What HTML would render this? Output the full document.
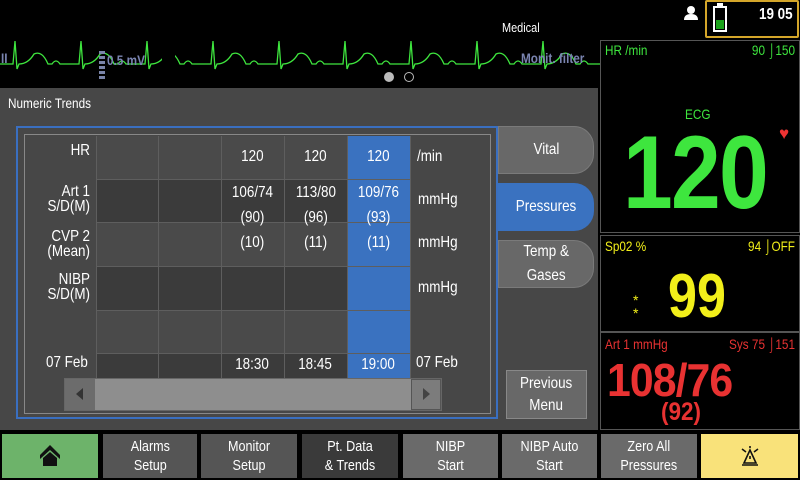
<!DOCTYPE html>
<html><head><meta charset="utf-8"><style>
*{margin:0;padding:0;box-sizing:border-box}
body{width:800px;height:480px;background:#000;position:relative;overflow:hidden;font-family:"Liberation Sans Narrow","Liberation Sans",sans-serif;color:#fff}
.a{position:absolute}
.c{display:flex;align-items:center;justify-content:center;text-align:center}
.n{display:inline-block;transform:scaleX(.84)}
.L{transform:scaleX(.84);transform-origin:left top}
.R{transform:scaleX(.84);transform-origin:right top}
.btn{position:absolute;top:434px;height:44px;font-size:15px;line-height:19px;color:#fff}
.cell{position:absolute;font-size:16px;color:#fff}
</style></head><body>
<!-- top -->
<div class="a L" style="left:502px;top:20px;font-size:13px">Medical</div>
<svg class="a" style="left:683px;top:5px" width="16" height="16"><circle cx="8" cy="5" r="4" fill="#fff"/><path d="M1 15 Q1 9 8 9 Q15 9 15 15Z" fill="#fff"/></svg>
<div class="a" style="left:705px;top:0;width:94px;height:38px;border:2px solid #d4a62a;border-radius:2px"></div>
<div class="a" style="left:713px;top:6px;width:14px;height:26px;border:2px solid #fff"></div>
<div class="a" style="left:717px;top:3px;width:6px;height:3px;background:#fff"></div>
<div class="a" style="left:716px;top:20px;width:8px;height:9px;background:#1aa21a"></div>
<div class="a L" style="left:759px;top:6px;font-size:16px;font-weight:bold">19 05</div>
<!-- ECG -->
<svg class="a" style="left:0;top:36px" width="600" height="50">
<defs><pattern id="p" x="-2" y="0" width="66" height="50" patternUnits="userSpaceOnUse">
<path d="M0 28 L15 28 L17 5 L19 33 L21 28 Q30 28 36 18 Q44 14 50 28 L54 28 Q58 22 62 28 L66 28" fill="none" stroke="#3ee63e" stroke-width="1.3"/></pattern></defs>
<rect x="0" y="0" width="162" height="50" fill="url(#p)"/>
<rect x="175" y="0" width="425" height="50" fill="url(#p)"/>
<rect x="99" y="15" width="6" height="3" fill="#7a84a8"/><rect x="99" y="20" width="6" height="3" fill="#7a84a8"/><rect x="99" y="25" width="6" height="3" fill="#7a84a8"/><rect x="99" y="30" width="6" height="3" fill="#7a84a8"/><rect x="99" y="35" width="6" height="3" fill="#7a84a8"/><rect x="99" y="40" width="6" height="3" fill="#7a84a8"/>
</svg>
<div class="a L" style="left:1px;top:50px;font-size:14px;color:#7a84b0;font-weight:bold">II</div>
<div class="a L" style="left:107px;top:52px;font-size:14px;color:#7a84b0;font-weight:bold">0.5 mV</div>
<div class="a L" style="left:521px;top:50px;font-size:14px;color:#7a84b0;font-weight:bold">Monit. filter</div>
<div class="a" style="left:384px;top:72px;width:10px;height:10px;border-radius:50%;background:#bbb"></div>
<div class="a" style="left:404px;top:72px;width:10px;height:10px;border-radius:50%;border:1.5px solid #bbb"></div>
<!-- main panel -->
<div class="a" style="left:0;top:88px;width:598px;height:342px;background:#474747"></div>
<div class="a L" style="left:8px;top:95px;font-size:14px">Numeric Trends</div>
<div class="a" style="left:16px;top:126px;width:482px;height:293px;border:2px solid #3a6fc0"></div>
<div class="a" style="left:24px;top:134px;width:467px;height:280px;border:1px solid #888"></div>
<svg class="a" style="left:96px;top:136px" width="315" height="242">
<rect x="0" y="0" width="315" height="43" fill="#4a4a4a"/>
<rect x="0" y="43" width="315" height="43" fill="#3b3b3b"/>
<rect x="0" y="86" width="315" height="44" fill="#4a4a4a"/>
<rect x="0" y="130" width="315" height="44" fill="#3b3b3b"/>
<rect x="0" y="174" width="315" height="43" fill="#4a4a4a"/>
<rect x="0" y="217" width="315" height="25" fill="#3b3b3b"/>
<rect x="251" y="0" width="63" height="242" fill="#3a72c0"/>
<g stroke="#5e5e5e" stroke-width="1">
<line x1="0.5" y1="0" x2="0.5" y2="242"/><line x1="62.5" y1="0" x2="62.5" y2="242"/><line x1="125.5" y1="0" x2="125.5" y2="242"/><line x1="188.5" y1="0" x2="188.5" y2="242"/><line x1="251.5" y1="0" x2="251.5" y2="242"/><line x1="314.5" y1="0" x2="314.5" y2="242"/>
<line x1="0" y1="43.5" x2="315" y2="43.5"/><line x1="0" y1="86.5" x2="315" y2="86.5"/><line x1="0" y1="130.5" x2="315" y2="130.5"/><line x1="0" y1="174.5" x2="315" y2="174.5"/><line x1="0" y1="217.5" x2="315" y2="217.5"/>
</g></svg>
<!-- labels -->
<div class="cell R" style="left:30px;top:142px;width:60px;text-align:right">HR</div>
<div class="cell R" style="left:30px;top:184px;width:60px;text-align:right;line-height:15px">Art 1<br>S/D(M)</div>
<div class="cell R" style="left:30px;top:229px;width:60px;text-align:right;line-height:15px">CVP 2<br>(Mean)</div>
<div class="cell R" style="left:30px;top:272px;width:60px;text-align:right;line-height:15px">NIBP<br>S/D(M)</div>
<div class="cell L" style="left:46px;top:354px">07 Feb</div>
<div class="cell L" style="left:417px;top:148px">/min</div>
<div class="cell L" style="left:418px;top:191px">mmHg</div>
<div class="cell L" style="left:418px;top:234px">mmHg</div>
<div class="cell L" style="left:418px;top:279px">mmHg</div>
<div class="cell L" style="left:416px;top:354px">07 Feb</div>
<div class="cell c" style="left:221px;top:148px;width:63px"><span class="n">120</span></div>
<div class="cell c" style="left:284px;top:148px;width:63px"><span class="n">120</span></div>
<div class="cell c" style="left:347px;top:148px;width:63px"><span class="n">120</span></div>
<div class="cell c" style="left:221px;top:180px;width:63px;line-height:25px"><span class="n">106/74<br>(90)</span></div>
<div class="cell c" style="left:284px;top:180px;width:63px;line-height:25px"><span class="n">113/80<br>(96)</span></div>
<div class="cell c" style="left:347px;top:180px;width:63px;line-height:25px"><span class="n">109/76<br>(93)</span></div>
<div class="cell c" style="left:221px;top:234px;width:63px"><span class="n">(10)</span></div>
<div class="cell c" style="left:284px;top:234px;width:63px"><span class="n">(11)</span></div>
<div class="cell c" style="left:347px;top:234px;width:63px"><span class="n">(11)</span></div>
<div class="cell c" style="left:221px;top:356px;width:63px"><span class="n">18:30</span></div>
<div class="cell c" style="left:284px;top:356px;width:63px"><span class="n">18:45</span></div>
<div class="cell c" style="left:347px;top:356px;width:63px"><span class="n">19:00</span></div>
<!-- scrollbar -->
<div class="a" style="left:64px;top:378px;width:378px;height:33px;background:#8e8e8e;border:1px solid #666"></div>
<div class="a" style="left:65px;top:379px;width:30px;height:31px;background:#6c6c6c"></div>
<div class="a" style="left:411px;top:379px;width:30px;height:31px;background:#7c7c7c;border:1px solid #555"></div>
<div class="a" style="left:76px;top:388px;border-right:7px solid #333;border-top:6px solid transparent;border-bottom:6px solid transparent"></div>
<div class="a" style="left:423px;top:388px;border-left:7px solid #444;border-top:6px solid transparent;border-bottom:6px solid transparent"></div>
<!-- tabs -->
<div class="a c" style="left:498px;top:126px;width:96px;height:48px;background:#686868;border:1px solid #7a7a7a;border-radius:0 20px 20px 0;font-size:16px"><span class="n">Vital</span></div>
<div class="a c" style="left:498px;top:183px;width:96px;height:48px;background:#3a72c0;border-radius:0 20px 20px 0;font-size:16px"><span class="n">Pressures</span></div>
<div class="a c" style="left:498px;top:240px;width:96px;height:48px;background:#686868;border:1px solid #7a7a7a;border-radius:0 20px 20px 0;font-size:16px;line-height:24px"><span class="n">Temp &amp;<br>Gases</span></div>
<div class="a c" style="left:506px;top:370px;width:81px;height:49px;background:#686868;border:1px solid #888;font-size:16px;line-height:22px"><span class="n">Previous<br>Menu</span></div>
<!-- right panels -->
<div class="a" style="left:600px;top:40px;width:200px;height:193px;border:1px solid #555"></div>
<div class="a L" style="left:605px;top:42px;font-size:14px;color:#3ee63e">HR /min</div>
<div class="a R" style="left:700px;width:95px;text-align:right;top:42px;font-size:14px;color:#3ee63e">90 ⌡150</div>
<div class="a L" style="left:685px;top:106px;font-size:14px;color:#3ee63e">ECG</div>
<div class="a" style="left:623px;top:118px;font-size:104px;font-weight:bold;color:#3ee63e;line-height:110px;font-family:'Liberation Sans',sans-serif;letter-spacing:-2px;transform:scaleX(.86);transform-origin:left top">120</div>
<div class="a" style="left:779px;top:124px;font-size:17px;color:#e33">♥</div>
<div class="a" style="left:600px;top:235px;width:200px;height:97px;border:1px solid #555"></div>
<div class="a L" style="left:605px;top:238px;font-size:14px;color:#f2ef1a">Sp02 %</div>
<div class="a R" style="left:700px;width:95px;text-align:right;top:238px;font-size:14px;color:#f2ef1a">94 ⌡OFF</div>
<div class="a" style="left:633px;top:294px;font-size:14px;color:#f2ef1a;line-height:13px">*<br>*</div>
<div class="a L" style="left:668px;top:262px;font-size:62px;font-weight:bold;color:#f2ef1a;line-height:70px;font-family:'Liberation Sans',sans-serif">99</div>
<div class="a" style="left:600px;top:332px;width:200px;height:98px;border:1px solid #555"></div>
<div class="a L" style="left:605px;top:336px;font-size:14px;color:#e83232">Art 1 mmHg</div>
<div class="a R" style="left:695px;width:100px;text-align:right;top:336px;font-size:14px;color:#e83232">Sys 75 ⌡151</div>
<div class="a" style="left:607px;top:354px;font-size:46px;font-weight:bold;color:#e83232;line-height:52px;font-family:'Liberation Sans',sans-serif;letter-spacing:-1px;transform:scaleX(.93);transform-origin:left top">108/76</div>
<div class="a" style="left:661px;top:398px;font-size:25px;font-weight:bold;color:#e83232;line-height:28px;font-family:'Liberation Sans',sans-serif;transform:scaleX(.9);transform-origin:left top">(92)</div>
<!-- bottom -->
<div class="btn c" style="left:2px;width:96px;background:#6db36a"><svg width="22" height="24" viewBox="0 0 22 24"><path d="M11 1 L21 11 L21 15 L11 6 L1 15 L1 11Z M4 14 L11 8 L18 14 L18 22 L4 22Z" fill="#111"/></svg></div>
<div class="btn c" style="left:103px;width:94px;background:#555"><span class="n">Alarms<br>Setup</span></div>
<div class="btn c" style="left:201px;width:96px;background:#555"><span class="n">Monitor<br>Setup</span></div>
<div class="btn c" style="left:302px;width:96px;background:#3a3a3a"><span class="n">Pt. Data<br>&amp; Trends</span></div>
<div class="btn c" style="left:403px;width:95px;background:#6a6a6a"><span class="n">NIBP<br>Start</span></div>
<div class="btn c" style="left:502px;width:95px;background:#6a6a6a"><span class="n">NIBP Auto<br>Start</span></div>
<div class="btn c" style="left:601px;width:96px;background:#6a6a6a"><span class="n">Zero All<br>Pressures</span></div>
<div class="btn c" style="left:701px;width:97px;background:#f9e27a"><svg width="22" height="22" viewBox="0 0 22 22" fill="none" stroke="#111" stroke-width="1.6"><path d="M11 5 L5 18 L17 18Z M11 11 L11 14 M3 4 L7 7 M19 4 L15 7 M11 1 L11 3 M3 20 L19 20"/></svg></div>
</body></html>
